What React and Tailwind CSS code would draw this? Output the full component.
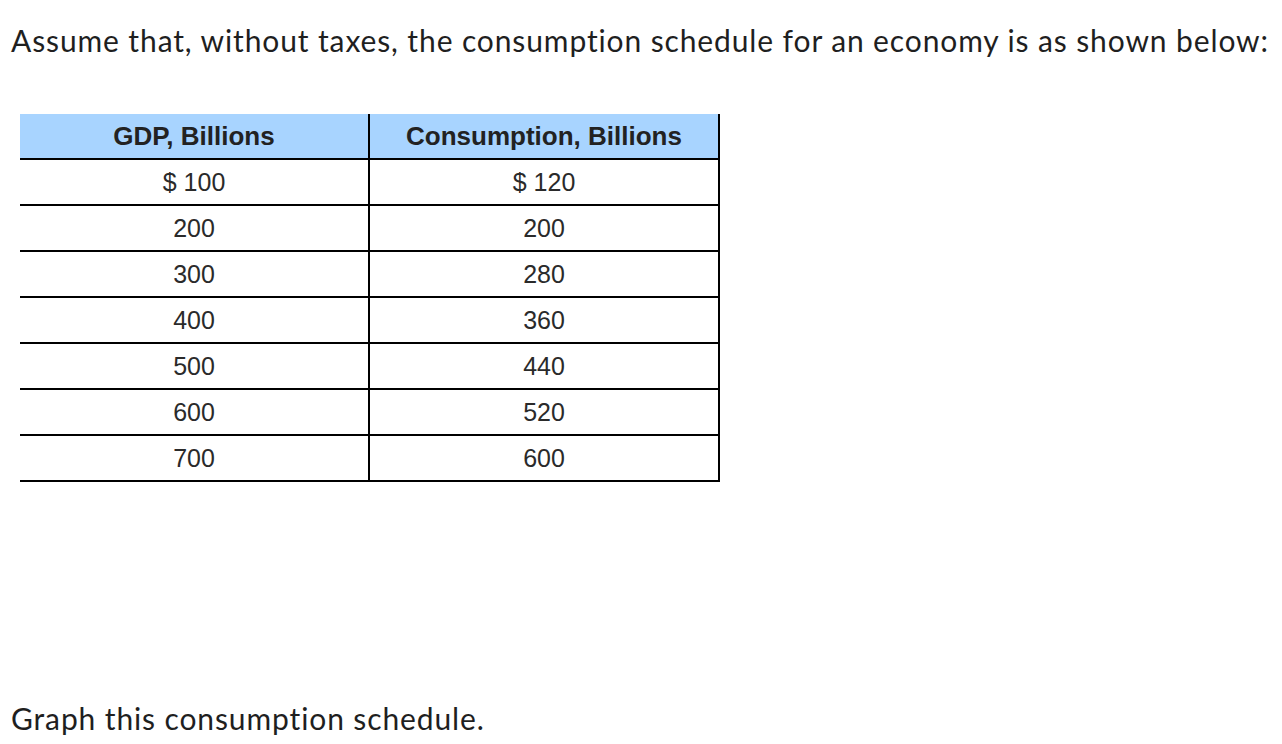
const rows = [
  ["$ 100", "$ 120"],
  ["200", "200"],
  ["300", "280"],
  ["400", "360"],
  ["500", "440"],
  ["600", "520"],
  ["700", "600"]
];

export default function App() {
  return (
    <div className="min-h-screen bg-white pl-[11px] pt-[20px] text-[#1f1f1f]" style={{ fontFamily: "Lato, 'Open Sans', sans-serif" }}>
      <p className="whitespace-nowrap text-[30px] leading-[40px] tracking-[0.88px]">
        Assume that, without taxes, the consumption schedule for an economy is as shown below:
      </p>

      <div className="mt-[54px] ml-[9px] w-[700px] text-[25px]" style={{ fontFamily: "'Liberation Sans', Arial, sans-serif" }}>
        <div className="flex h-[46px] border-b-2 border-black bg-[#a8d4ff] text-[26px] font-bold text-[#222]">
          <div className="flex w-[350px] items-center justify-center border-r-2 border-black pt-[1px]">GDP, Billions</div>
          <div className="flex w-[350px] items-center justify-center border-r-2 border-black pt-[1px]">Consumption, Billions</div>
        </div>
        {rows.map(([gdp, cons]) => (
          <div key={gdp} className="flex h-[46px] border-b-2 border-black text-[#2a2a2a]">
            <div className="flex w-[350px] items-center justify-center border-r-2 border-black pt-[1px]">{gdp}</div>
            <div className="flex w-[350px] items-center justify-center border-r-2 border-black pt-[1px]">{cons}</div>
          </div>
        ))}
      </div>

      <p className="mt-[216px] text-[30px] leading-[40px] tracking-[0.88px]">Graph this consumption schedule.</p>
    </div>
  );
}
